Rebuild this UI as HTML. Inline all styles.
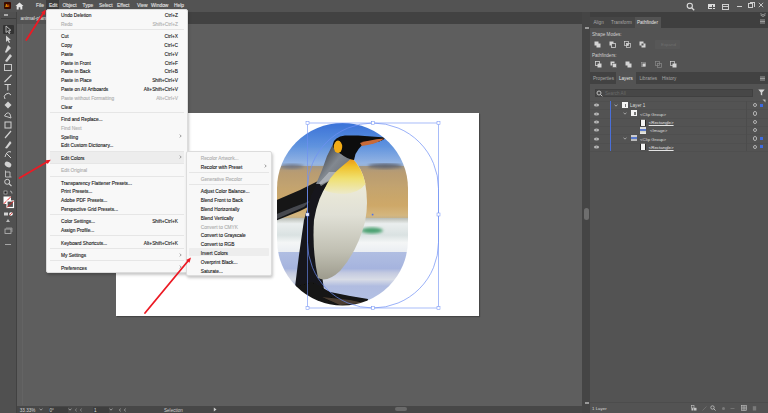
<!DOCTYPE html>
<html><head><meta charset="utf-8">
<style>
*{margin:0;padding:0;box-sizing:border-box}
html,body{width:768px;height:413px;overflow:hidden;background:#5e5e5e;font-family:"Liberation Sans",sans-serif;position:relative}
.a{position:absolute}
.t{position:absolute;white-space:nowrap;line-height:1}
.menu{background:#f8f8f8;border:1px solid #dcdcdc;box-shadow:1px 2px 3px rgba(0,0,0,.22);border-radius:2px}
.mi{position:absolute;white-space:nowrap;line-height:1;color:#1e1e1e;-webkit-text-stroke:0.12px currentColor}
.sep{position:absolute;height:1px;background:#e6e6e6}
.pt{position:absolute;white-space:nowrap;line-height:1;color:#cfcfcf}
</style></head><body>
<div class="a" style="left:0;top:0;width:768px;height:11.6px;background:#535353"></div>
<div class="a" style="left:17px;top:11.6px;width:565px;height:12px;background:#424242"></div>
<div class="a" style="left:17px;top:11.6px;width:29px;height:12px;background:#535353"></div>
<div class="pt" style="left:20.50px;top:17.05px;font-size:4.9px;color:#e8e8e8;">animal-plant.ai</div>
<div class="a" style="left:0;top:12px;width:17px;height:401px;background:#505050;border-right:1px solid #424242"></div>
<div class="a" style="left:17px;top:405.8px;width:565px;height:7.2px;background:#474747"></div>
<div class="a" style="left:21.8px;top:24px;width:1.2px;height:381px;background:#646464"></div>
<div class="a" style="left:582px;top:12px;width:8px;height:401px;background:#454545"></div>
<div class="a" style="left:590px;top:12px;width:178px;height:401px;background:#535353"></div>
<div class="pt" style="left:19.80px;top:409.20px;font-size:4.6px;color:#d6d6d6;">33.33%</div>
<div class="a" style="left:48.5px;top:406.5px;width:19px;height:6.5px;background:#3e3e3e"></div>
<div class="a" style="left:92.5px;top:406.5px;width:16px;height:6.5px;background:#3e3e3e"></div>
<div class="pt" style="left:49.50px;top:409.20px;font-size:4.6px;color:#d6d6d6;">0&deg;</div>
<div class="pt" style="left:94.00px;top:409.20px;font-size:4.6px;color:#d6d6d6;">1</div>
<div class="pt" style="left:164.00px;top:409.20px;font-size:4.6px;color:#cfcfcf;">Selection</div>
<svg class="a" style="left:39px;top:408px" width="4" height="3" viewBox="0 0 4 3"><path d="M0.5 0.6 L2 2.2 L3.5 0.6" fill="none" stroke="#bbb" stroke-width="0.7"/></svg>
<svg class="a" style="left:68.4px;top:408px" width="4" height="3" viewBox="0 0 4 3"><path d="M0.5 0.6 L2 2.2 L3.5 0.6" fill="none" stroke="#bbb" stroke-width="0.7"/></svg>
<svg class="a" style="left:108.8px;top:408px" width="4" height="3" viewBox="0 0 4 3"><path d="M0.5 0.6 L2 2.2 L3.5 0.6" fill="none" stroke="#bbb" stroke-width="0.7"/></svg>
<svg class="a" style="left:74px;top:407.5px" width="4" height="4" viewBox="0 0 4 4"><path d="M3 0.5 L1 2 L3 3.5" fill="none" stroke="#888" stroke-width="0.7"/></svg>
<svg class="a" style="left:79px;top:407.5px" width="4" height="4" viewBox="0 0 4 4"><path d="M3 0.5 L1 2 L3 3.5" fill="none" stroke="#888" stroke-width="0.7"/></svg>
<svg class="a" style="left:117.5px;top:407.5px" width="4" height="4" viewBox="0 0 4 4"><path d="M3 0.5 L1 2 L3 3.5" fill="none" stroke="#999" stroke-width="0.7"/></svg>
<svg class="a" style="left:123px;top:407.5px" width="4" height="4" viewBox="0 0 4 4"><path d="M3 0.5 L1 2 L3 3.5" fill="none" stroke="#999" stroke-width="0.7"/></svg>
<svg class="a" style="left:213px;top:407px" width="4" height="5" viewBox="0 0 4 5"><path d="M0.8 0.5 L3.5 2.5 L0.8 4.5Z" fill="#ccc"/></svg>
<div class="a" style="left:395px;top:406.6px;width:11.5px;height:4.8px;background:#6a6a6a;border-radius:2.4px"></div>
<div class="a" style="left:4px;top:2px;width:7px;height:7px;background:#3a0a00;border-radius:1px"></div>
<div class="t" style="left:5px;top:3.5px;font-size:4px;color:#ff9a00;font-weight:bold">Ai</div>
<svg class="a" style="left:15px;top:2px" width="9" height="8" viewBox="0 0 9 8"><path d="M4.5 0.5 L8.5 4 H7.3 V7.5 H5.3 V5.2 H3.7 V7.5 H1.7 V4 H0.5 Z" fill="#e6e6e6"/></svg>
<div class="a" style="left:46px;top:0;width:13px;height:12px;background:#3c3c3c"></div>
<div class="pt" style="left:36.00px;top:4.15px;font-size:4.9px;color:#e4e4e4;-webkit-text-stroke:0.1px #e4e4e4;">File</div>
<div class="pt" style="left:49.00px;top:4.15px;font-size:4.9px;color:#e4e4e4;-webkit-text-stroke:0.1px #e4e4e4;">Edit</div>
<div class="pt" style="left:62.50px;top:4.15px;font-size:4.9px;color:#e4e4e4;-webkit-text-stroke:0.1px #e4e4e4;">Object</div>
<div class="pt" style="left:82.50px;top:4.15px;font-size:4.9px;color:#e4e4e4;-webkit-text-stroke:0.1px #e4e4e4;">Type</div>
<div class="pt" style="left:99.00px;top:4.15px;font-size:4.9px;color:#e4e4e4;-webkit-text-stroke:0.1px #e4e4e4;">Select</div>
<div class="pt" style="left:117.00px;top:4.15px;font-size:4.9px;color:#e4e4e4;-webkit-text-stroke:0.1px #e4e4e4;">Effect</div>
<div class="pt" style="left:137.00px;top:4.15px;font-size:4.9px;color:#e4e4e4;-webkit-text-stroke:0.1px #e4e4e4;">View</div>
<div class="pt" style="left:151.00px;top:4.15px;font-size:4.9px;color:#e4e4e4;-webkit-text-stroke:0.1px #e4e4e4;">Window</div>
<div class="pt" style="left:174.00px;top:4.15px;font-size:4.9px;color:#e4e4e4;-webkit-text-stroke:0.1px #e4e4e4;">Help</div>
<div class="a" style="left:116px;top:113px;width:363px;height:203px;background:#fff;box-shadow:1px 1px 1px rgba(0,0,0,.25)"></div>
<div class="a" style="left:590px;top:11.6px;width:178px;height:16.4px;background:#3f3f3f"></div>
<div class="a" style="left:590px;top:17px;width:45px;height:11px;background:#464646"></div>
<div class="a" style="left:635px;top:17px;width:26px;height:11px;background:#535353"></div>
<div class="pt" style="left:593.50px;top:21.30px;font-size:4.6px;color:#a8a8a8;">Align</div>
<div class="pt" style="left:611.00px;top:21.30px;font-size:4.6px;color:#a8a8a8;">Transform</div>
<div class="pt" style="left:637.00px;top:21.30px;font-size:4.6px;color:#e6e6e6;">Pathfinder</div>
<div class="a" style="left:760px;top:21px;width:5px;height:0.8px;background:#9a9a9a;box-shadow:0 1.5px 0 #9a9a9a,0 -1.5px 0 #9a9a9a"></div>
<div class="pt" style="left:592.00px;top:32.80px;font-size:4.6px;color:#d0d0d0;">Shape Modes:</div>
<svg class="a" style="left:593.5px;top:40.5px" width="7" height="7" viewBox="0 0 7 7"><rect x="0.5" y="0.5" width="4" height="4" fill="#d4d4d4"/><rect x="2.5" y="2.5" width="4" height="4" fill="#d4d4d4"/></svg>
<svg class="a" style="left:608.5px;top:40.5px" width="7" height="7" viewBox="0 0 7 7"><rect x="0.5" y="0.5" width="4" height="4" fill="#d4d4d4"/><rect x="2.5" y="2.5" width="4" height="4" fill="#535353" stroke="#d4d4d4" stroke-width="0.8"/></svg>
<svg class="a" style="left:623.5px;top:40.5px" width="7" height="7" viewBox="0 0 7 7"><rect x="0.5" y="0.5" width="4" height="4" fill="none" stroke="#d4d4d4" stroke-width="0.7"/><rect x="2.5" y="2.5" width="4" height="4" fill="none" stroke="#d4d4d4" stroke-width="0.7"/><rect x="2.5" y="2.5" width="2" height="2" fill="#d4d4d4"/></svg>
<svg class="a" style="left:638.5px;top:40.5px" width="7" height="7" viewBox="0 0 7 7"><rect x="0.5" y="0.5" width="4" height="4" fill="#d4d4d4"/><rect x="2.5" y="2.5" width="4" height="4" fill="#d4d4d4"/><rect x="2.5" y="2.5" width="2" height="2" fill="#535353"/></svg>
<div class="a" style="left:655px;top:40px;width:25px;height:9px;background:#575757;border-radius:1px"></div>
<div class="pt" style="left:661.00px;top:43.40px;font-size:4.4px;color:#6e6e6e;">Expand</div>
<div class="pt" style="left:592.00px;top:53.80px;font-size:4.6px;color:#d0d0d0;">Pathfinders:</div>
<svg class="a" style="left:594.5px;top:60.5px" width="7" height="7" viewBox="0 0 7 7"><rect x="0.5" y="0.5" width="4" height="4" fill="none" stroke="#d4d4d4" stroke-width="0.8"/><rect x="2.5" y="2.5" width="4" height="4" fill="#d4d4d4"/></svg>
<svg class="a" style="left:609.5px;top:60.5px" width="7" height="7" viewBox="0 0 7 7"><rect x="0.5" y="0.5" width="4" height="4" fill="#d4d4d4"/><rect x="2.5" y="2.5" width="4" height="4" fill="#d4d4d4" stroke="#535353" stroke-width="0.5"/></svg>
<svg class="a" style="left:624.5px;top:60.5px" width="7" height="7" viewBox="0 0 7 7"><rect x="0.5" y="0.5" width="4" height="4" fill="#d4d4d4"/><rect x="2.5" y="2.5" width="4" height="4" fill="#d4d4d4"/></svg>
<svg class="a" style="left:639.5px;top:60.5px" width="7" height="7" viewBox="0 0 7 7"><rect x="1.5" y="1.5" width="4" height="4" fill="none" stroke="#9a9a9a" stroke-width="0.6"/><rect x="2.5" y="2.5" width="3" height="3" fill="#d4d4d4"/></svg>
<svg class="a" style="left:654.5px;top:60.5px" width="7" height="7" viewBox="0 0 7 7"><rect x="0.5" y="0.5" width="4" height="4" fill="none" stroke="#8a8a8a" stroke-width="0.7"/><rect x="2.5" y="2.5" width="4" height="4" fill="none" stroke="#8a8a8a" stroke-width="0.7"/></svg>
<svg class="a" style="left:669.5px;top:60.5px" width="7" height="7" viewBox="0 0 7 7"><rect x="0.5" y="0.5" width="4" height="4" fill="none" stroke="#d4d4d4" stroke-width="0.7"/><rect x="2.5" y="2.5" width="4" height="4" fill="#d4d4d4"/></svg>
<div class="a" style="left:590px;top:72px;width:178px;height:12px;background:#424242"></div>
<div class="a" style="left:616px;top:72px;width:20px;height:12px;background:#535353"></div>
<div class="pt" style="left:593.00px;top:77.30px;font-size:4.6px;color:#a8a8a8;">Properties</div>
<div class="pt" style="left:619.00px;top:77.30px;font-size:4.6px;color:#e6e6e6;">Layers</div>
<div class="pt" style="left:639.50px;top:77.30px;font-size:4.6px;color:#a8a8a8;">Libraries</div>
<div class="pt" style="left:662.00px;top:77.30px;font-size:4.6px;color:#a8a8a8;">History</div>
<div class="a" style="left:760px;top:77.5px;width:5px;height:0.8px;background:#9a9a9a;box-shadow:0 1.5px 0 #9a9a9a,0 -1.5px 0 #9a9a9a"></div>
<div class="a" style="left:595px;top:89px;width:158px;height:8px;background:#474747;border:0.6px solid #404040"></div>
<svg class="a" style="left:596px;top:89.5px" width="7" height="7" viewBox="0 0 7 7"><circle cx="3" cy="3" r="2" fill="none" stroke="#c8c8c8" stroke-width="0.9"/><path d="M4.4 4.4 L6.3 6.3" stroke="#c8c8c8" stroke-width="1"/></svg>
<div class="pt" style="left:605.00px;top:91.60px;font-size:4.6px;color:#6a6a6a;">Search All</div>
<svg class="a" style="left:757.5px;top:89px" width="7" height="7" viewBox="0 0 7 7"><path d="M0.3 0.5 H6.7 L4.2 3.6 V6.6 L2.8 5.8 V3.6 Z" fill="#d4d4d4"/></svg>
<div class="a" style="left:590px;top:101.0px;width:178px;height:0.6px;background:#4f4f4f"></div>
<svg class="a" style="left:593px;top:103.2px" width="7" height="4" viewBox="0 0 7 4"><ellipse cx="3.5" cy="2" rx="2.6" ry="1.5" fill="#b8b8b8"/><circle cx="3.5" cy="2" r="0.7" fill="#8a8a8a"/></svg>
<div class="a" style="left:752.5px;top:103.0px;width:4.4px;height:4.4px;border:1px solid #b4b4b4;border-radius:50%"></div>
<div class="a" style="left:590px;top:109.4px;width:178px;height:0.6px;background:#4f4f4f"></div>
<svg class="a" style="left:593px;top:111.6px" width="7" height="4" viewBox="0 0 7 4"><ellipse cx="3.5" cy="2" rx="2.6" ry="1.5" fill="#b8b8b8"/><circle cx="3.5" cy="2" r="0.7" fill="#8a8a8a"/></svg>
<div class="a" style="left:752.5px;top:111.4px;width:4.4px;height:4.4px;border:1px solid #b4b4b4;border-radius:50%"></div>
<div class="a" style="left:590px;top:118.0px;width:178px;height:0.6px;background:#4f4f4f"></div>
<svg class="a" style="left:593px;top:120.2px" width="7" height="4" viewBox="0 0 7 4"><ellipse cx="3.5" cy="2" rx="2.6" ry="1.5" fill="#b8b8b8"/><circle cx="3.5" cy="2" r="0.7" fill="#8a8a8a"/></svg>
<div class="a" style="left:752.5px;top:120.0px;width:4.4px;height:4.4px;border:1px solid #b4b4b4;border-radius:50%"></div>
<div class="a" style="left:590px;top:126.1px;width:178px;height:0.6px;background:#4f4f4f"></div>
<svg class="a" style="left:593px;top:128.3px" width="7" height="4" viewBox="0 0 7 4"><ellipse cx="3.5" cy="2" rx="2.6" ry="1.5" fill="#b8b8b8"/><circle cx="3.5" cy="2" r="0.7" fill="#8a8a8a"/></svg>
<div class="a" style="left:752.5px;top:128.1px;width:4.4px;height:4.4px;border:1px solid #b4b4b4;border-radius:50%"></div>
<div class="a" style="left:590px;top:134.4px;width:178px;height:0.6px;background:#4f4f4f"></div>
<svg class="a" style="left:593px;top:136.6px" width="7" height="4" viewBox="0 0 7 4"><ellipse cx="3.5" cy="2" rx="2.6" ry="1.5" fill="#b8b8b8"/><circle cx="3.5" cy="2" r="0.7" fill="#8a8a8a"/></svg>
<div class="a" style="left:752.5px;top:136.4px;width:4.4px;height:4.4px;border:1px solid #b4b4b4;border-radius:50%"></div>
<div class="a" style="left:590px;top:142.7px;width:178px;height:0.6px;background:#4f4f4f"></div>
<svg class="a" style="left:593px;top:144.9px" width="7" height="4" viewBox="0 0 7 4"><ellipse cx="3.5" cy="2" rx="2.6" ry="1.5" fill="#b8b8b8"/><circle cx="3.5" cy="2" r="0.7" fill="#8a8a8a"/></svg>
<div class="a" style="left:752.5px;top:144.7px;width:4.4px;height:4.4px;border:1px solid #b4b4b4;border-radius:50%"></div>
<div class="a" style="left:590px;top:151.1px;width:178px;height:0.6px;background:#4f4f4f"></div>
<div class="a" style="left:745.5px;top:101px;width:0.6px;height:50px;background:#4c4c4c"></div>
<svg class="a" style="left:762px;top:99px" width="4" height="4" viewBox="0 0 4 4"><path d="M0.5 0.5 H3.5 V3.5Z" fill="#bbb"/></svg>
<div class="a" style="left:609.6px;top:101px;width:1.5px;height:50px;background:#4a6fd8"></div>
<div class="a" style="left:759.5px;top:103.7px;width:3px;height:3px;background:#3d6ae0"></div>
<div class="a" style="left:759.5px;top:137.1px;width:3px;height:3px;background:#3d6ae0"></div>
<div class="a" style="left:759.5px;top:145.4px;width:3px;height:3px;background:#3d6ae0"></div>
<svg class="a" style="left:613.6px;top:103.7px" width="4" height="3" viewBox="0 0 4 3"><path d="M0.5 0.6 L2 2.2 L3.5 0.6" fill="none" stroke="#c8c8c8" stroke-width="0.7"/></svg>
<svg class="a" style="left:622.8px;top:112.1px" width="4" height="3" viewBox="0 0 4 3"><path d="M0.5 0.6 L2 2.2 L3.5 0.6" fill="none" stroke="#c8c8c8" stroke-width="0.7"/></svg>
<svg class="a" style="left:622.8px;top:137.1px" width="4" height="3" viewBox="0 0 4 3"><path d="M0.5 0.6 L2 2.2 L3.5 0.6" fill="none" stroke="#c8c8c8" stroke-width="0.7"/></svg>
<div class="a" style="left:621.5px;top:102px;width:6px;height:6px;background:#f4f4f4"><div class="a" style="left:3px;top:1.5px;width:1.5px;height:3px;background:#777"></div></div>
<div class="pt" style="left:630.00px;top:104.00px;font-size:4.6px;color:#dcdcdc;">Layer 1</div>
<div class="a" style="left:631px;top:110.2px;width:6px;height:6px;background:#f4f4f4"><div class="a" style="left:3px;top:1.5px;width:1.5px;height:3px;background:#777"></div></div>
<div class="pt" style="left:640.00px;top:112.70px;font-size:4.4px;color:#dcdcdc;">&lt;Clip Group&gt;</div>
<div class="a" style="left:640.3px;top:118.7px;width:6px;height:7px;background:#f4f4f4;border-left:1px solid #2a2a2a;border-right:1px solid #2a2a2a;border-top:0.6px solid #777"></div>
<div class="pt" style="left:648.70px;top:121.10px;font-size:4.4px;color:#e4e4e4;text-decoration:underline;">&lt;Rectangle&gt;</div>
<div class="a" style="left:640.3px;top:127px;width:6px;height:7px;background:linear-gradient(#ddd 0,#ddd 25%,#5a7acc 25%,#5a7acc 50%,#c8c8b8 50%,#eee 100%)"></div>
<div class="pt" style="left:650.00px;top:129.40px;font-size:4.4px;color:#dcdcdc;">&lt;Image&gt;</div>
<div class="a" style="left:631px;top:135px;width:6px;height:6px;background:linear-gradient(#ccc 0,#ccc 30%,#5a7acc 30%,#5a7acc 60%,#bbb 60%)"></div>
<div class="pt" style="left:640.00px;top:137.50px;font-size:4.4px;color:#dcdcdc;">&lt;Clip Group&gt;</div>
<div class="a" style="left:640.3px;top:143.4px;width:6px;height:7px;background:#f4f4f4;border-left:1px solid #2a2a2a;border-right:1px solid #2a2a2a;border-top:0.6px solid #777"></div>
<div class="pt" style="left:648.70px;top:145.90px;font-size:4.4px;color:#e4e4e4;text-decoration:underline;">&lt;Rectangle&gt;</div>
<div class="a" style="left:590px;top:402px;width:178px;height:0.6px;background:#4c4c4c"></div>
<div class="pt" style="left:592.00px;top:407.40px;font-size:4.4px;color:#d8d8d8;">1 Layer</div>
<svg class="a" style="left:691px;top:405px" width="6" height="6" viewBox="0 0 6 6"><rect x="0.5" y="0.5" width="2.5" height="2.5" fill="none" stroke="#c4c4c4" stroke-width="0.6"/><rect x="2.8" y="2.8" width="2.7" height="2.7" fill="#c4c4c4"/><rect x="0.5" y="3.2" width="1.8" height="2.3" fill="#c4c4c4"/></svg>
<svg class="a" style="left:702px;top:405.5px" width="5" height="5" viewBox="0 0 5 5"><path d="M0.5 4.5 L4.5 0.5" stroke="#7a7a7a" stroke-width="0.7"/></svg>
<svg class="a" style="left:710px;top:404.5px" width="6" height="6" viewBox="0 0 6 6"><circle cx="2.5" cy="2.5" r="1.7" fill="none" stroke="#c4c4c4" stroke-width="0.8"/><path d="M3.7 3.7 L5.5 5.5" stroke="#c4c4c4" stroke-width="0.9"/></svg>
<svg class="a" style="left:720.5px;top:405.5px" width="5" height="5" viewBox="0 0 5 5"><circle cx="2.5" cy="2.5" r="1.5" fill="#7a7a7a"/></svg>
<svg class="a" style="left:729.5px;top:405.5px" width="5" height="5" viewBox="0 0 5 5"><path d="M0.5 2.5 H4.5" stroke="#7a7a7a" stroke-width="0.8"/></svg>
<svg class="a" style="left:741px;top:404.5px" width="6" height="6" viewBox="0 0 6 6"><rect x="0.5" y="0.5" width="5" height="5" fill="none" stroke="#c4c4c4" stroke-width="0.6"/><path d="M2.2 0.5 V5.5 M3.8 0.5 V5.5 M0.5 2.2 H5.5 M0.5 3.8 H5.5" stroke="#c4c4c4" stroke-width="0.5"/></svg>
<svg class="a" style="left:751.5px;top:405px" width="5" height="6" viewBox="0 0 5 6"><rect x="0.8" y="1.2" width="3.4" height="4.3" fill="#7a7a7a"/></svg>
<svg class="a" style="left:686px;top:2px" width="9" height="9" viewBox="0 0 9 9"><circle cx="3.8" cy="3.8" r="2.6" fill="none" stroke="#dcdcdc" stroke-width="1.1"/><path d="M5.7 5.7 L8.2 8.2" stroke="#dcdcdc" stroke-width="1.3"/></svg>
<div class="a" style="left:708px;top:4px;width:7px;height:5px;background:#dcdcdc;border:0.6px solid #dcdcdc"><div class="a" style="left:3px;top:0;width:0.8px;height:5px;background:#535353"></div><div class="a" style="left:0;top:2px;width:7px;height:0.7px;background:#535353"></div></div>
<div class="a" style="left:722px;top:4px;width:7px;height:6px;border:0.9px solid #cfcfcf"><div class="a" style="left:0;top:1px;width:6px;height:0.9px;background:#cfcfcf"></div></div>
<div class="a" style="left:737px;top:5.5px;width:5px;height:0.9px;background:#cfcfcf"></div>
<div class="a" style="left:748px;top:3px;width:5px;height:5px;border:0.8px solid #cfcfcf;background:#535353"></div><div class="a" style="left:749.5px;top:1.8px;width:5px;height:5px;border-top:0.8px solid #cfcfcf;border-right:0.8px solid #cfcfcf"></div>
<svg class="a" style="left:758px;top:1.5px" width="6" height="6" viewBox="0 0 6 6"><path d="M0.8 0.8 L5.2 5.2 M5.2 0.8 L0.8 5.2" stroke="#cfcfcf" stroke-width="0.9"/></svg>
<svg class="a" style="left:760px;top:12.5px" width="6" height="4" viewBox="0 0 6 4"><path d="M0.5 0.5 L3 2 L5.5 0.5 M0.5 2 L3 3.5 L5.5 2" fill="none" stroke="#bbb" stroke-width="0.7"/></svg>
<div class="a" style="left:584.5px;top:26.5px;width:4px;height:1px;border-top:0.6px solid #999;border-bottom:0.6px solid #999"></div>
<div class="a" style="left:584.5px;top:401.5px;width:4px;height:1px;border-top:0.6px solid #999;border-bottom:0.6px solid #999"></div>
<div class="a" style="left:583.5px;top:208px;width:5px;height:12px;background:#6e6e6e;border-radius:2.5px"></div>
<div class="a" style="left:4px;top:13.5px;width:4px;height:1px;border-top:0.6px solid #aaa;border-bottom:0.6px solid #aaa"></div>
<div class="a" style="left:1px;top:18px;width:15px;height:0.8px;background:#3e3e3e"></div>
<div class="a" style="left:2.5px;top:24.5px;width:11px;height:9.5px;background:#333;border-radius:1px"></div>
<svg class="a" style="left:0;top:0" width="17" height="260" viewBox="0 0 17 260"><path d="M6 26 L6 32.5 L7.6 31 L9 33.5 L10 33 L8.8 30.5 L10.8 30.2 Z" fill="none" stroke="#d2d2d2" stroke-width="0.8"/><path d="M6 35.5 L6 42 L7.6 40.5 L9 43 L10 42.5 L8.8 40 L10.8 39.7 Z" fill="#d2d2d2"/><path d="M5 52 L8 45 L11 48 L6 53 Z" fill="#d2d2d2"/><path d="M5 61 L10 54 L12 56 L7 62 Z" fill="#d2d2d2"/><rect x="4.5" y="64.5" width="7" height="6" fill="none" stroke="#d2d2d2" stroke-width="0.9"/><path d="M4.5 82 L11.5 75" stroke="#d2d2d2" stroke-width="1.3"/><path d="M4.5 84.5 H11 M7.8 84.5 V90.5" stroke="#d2d2d2" stroke-width="1.1"/><path d="M5 99 A3.2 3.2 0 1 1 11 95" fill="none" stroke="#d2d2d2" stroke-width="1"/><path d="M8 101.5 L11.5 105 L8 108.5 L4.5 105 Z" fill="#d2d2d2"/><path d="M4.5 116 Q7 111 10 114 L11 118 L8 117 Z" fill="none" stroke="#d2d2d2" stroke-width="0.9"/><rect x="5" y="122" width="6" height="6" fill="none" stroke="#d2d2d2" stroke-width="1"/><path d="M5 138 L11 131" stroke="#d2d2d2" stroke-width="1.2"/><path d="M5 148 L10 141 L11.5 143 L7 148.5 Z" fill="#d2d2d2"/><path d="M5 157 Q7 150 11 152 M6 153 L11 158" fill="none" stroke="#d2d2d2" stroke-width="1"/><ellipse cx="8" cy="164.5" rx="3.5" ry="2.5" fill="#d2d2d2" transform="rotate(30 8 164.5)"/><path d="M5.5 170.5 V177 H11.5 M5.5 172 H10 V177" fill="none" stroke="#d2d2d2" stroke-width="0.8"/><circle cx="7.2" cy="181.8" r="2.5" fill="none" stroke="#d2d2d2" stroke-width="1"/><path d="M9 183.6 L11.5 186.2" stroke="#d2d2d2" stroke-width="1.2"/><rect x="4" y="191" width="3" height="3" fill="#222" stroke="#d2d2d2" stroke-width="0.6"/><path d="M10 191 Q12 191 12 193.5" fill="none" stroke="#d2d2d2" stroke-width="0.7"/><rect x="3.5" y="196.5" width="7.5" height="7.5" fill="#fff"/><path d="M3.8 203.8 L10.8 196.8" stroke="#e02020" stroke-width="1"/><rect x="7" y="201" width="6.5" height="6.5" fill="#535353" stroke="#fff" stroke-width="1.2"/><path d="M7 207.5 L13.5 201" stroke="#e02020" stroke-width="1"/><rect x="4" y="212.5" width="4" height="3" fill="#d2d2d2"/><circle cx="11" cy="214" r="1.8" fill="#fff"/><path d="M9.7 215.3 L12.3 212.7" stroke="#e02020" stroke-width="0.8"/><path d="M6 222 L8 219 L10 222 Z" fill="#bbb"/><rect x="5" y="229" width="6" height="4.5" fill="none" stroke="#bbb" stroke-width="0.8"/><path d="M6 228 H12 V232" fill="none" stroke="#bbb" stroke-width="0.6"/><path d="M5 244.5 H11" stroke="#bbb" stroke-width="0.8"/></svg>
<svg class="a" style="left:0;top:0" width="768" height="413" viewBox="0 0 768 413">
<defs>
<clipPath id="cp"><rect x="277" y="123" width="131" height="182.5" rx="65.5" ry="65.5"/></clipPath>
<linearGradient id="sky" x1="0" y1="123" x2="0" y2="168" gradientUnits="userSpaceOnUse">
<stop offset="0" stop-color="#3a72d8"/><stop offset="0.5" stop-color="#5e92de"/><stop offset="0.85" stop-color="#8eb0e2"/><stop offset="1" stop-color="#a4c0e4"/></linearGradient>
<linearGradient id="sand" x1="0" y1="166" x2="0" y2="222" gradientUnits="userSpaceOnUse">
<stop offset="0" stop-color="#a89880"/><stop offset="0.12" stop-color="#b89c72"/><stop offset="0.4" stop-color="#c4a46e"/><stop offset="0.7" stop-color="#cea868"/><stop offset="0.88" stop-color="#d4b67e"/><stop offset="1" stop-color="#b0ac9c"/></linearGradient>
<linearGradient id="surf" x1="0" y1="218" x2="0" y2="256" gradientUnits="userSpaceOnUse">
<stop offset="0" stop-color="#b8bcb4"/><stop offset="0.15" stop-color="#eaeeee"/><stop offset="0.45" stop-color="#dae2e2"/><stop offset="0.65" stop-color="#f4f6f6"/><stop offset="1" stop-color="#e6eaf0"/></linearGradient>
<linearGradient id="water" x1="0" y1="252" x2="0" y2="307" gradientUnits="userSpaceOnUse">
<stop offset="0" stop-color="#b0bee2"/><stop offset="0.3" stop-color="#a6b4de"/><stop offset="0.38" stop-color="#c4cae0"/><stop offset="0.5" stop-color="#d8dce6"/><stop offset="0.62" stop-color="#b0bce0"/><stop offset="1" stop-color="#b4c2e6"/></linearGradient>
<linearGradient id="belly" x1="0" y1="180" x2="0" y2="280" gradientUnits="userSpaceOnUse">
<stop offset="0" stop-color="#eeecd8"/><stop offset="0.35" stop-color="#e0e0d6"/><stop offset="0.72" stop-color="#c0bfb2"/><stop offset="1" stop-color="#9c9a8c"/></linearGradient>
<linearGradient id="chest" x1="0" y1="158" x2="0" y2="195" gradientUnits="userSpaceOnUse">
<stop offset="0" stop-color="#e8901a"/><stop offset="0.22" stop-color="#f0c028"/><stop offset="0.55" stop-color="#f0e070"/><stop offset="1" stop-color="#ecead0"/></linearGradient>
<linearGradient id="neck" x1="320" y1="150" x2="350" y2="175" gradientUnits="userSpaceOnUse">
<stop offset="0" stop-color="#34383e"/><stop offset="0.5" stop-color="#828890"/><stop offset="1" stop-color="#686e76"/></linearGradient>
<filter id="soft" x="-5%" y="-5%" width="110%" height="110%"><feGaussianBlur stdDeviation="0.35"/></filter>
<filter id="bl" x="-10%" y="-10%" width="120%" height="120%"><feGaussianBlur stdDeviation="1.6"/></filter>
</defs>
<g clip-path="url(#cp)"><g filter="url(#soft)">
<rect x="270" y="120" width="145" height="50" fill="url(#sky)"/>
<rect x="270" y="166" width="145" height="56" fill="url(#sand)"/>
<g filter="url(#bl)">
<ellipse cx="292" cy="166.5" rx="12" ry="2.2" fill="#6a7080"/>
<ellipse cx="385" cy="166.2" rx="17" ry="2.6" fill="#5a5e6a"/>
<rect x="270" y="165.8" width="145" height="2" fill="#8a8a8a" opacity="0.45"/>
</g>
<rect x="270" y="218" width="145" height="36" fill="url(#surf)"/>
<g filter="url(#bl)">
<ellipse cx="372" cy="230.5" rx="11" ry="3" fill="#4aa070"/>
</g>
<rect x="270" y="252" width="145" height="56" fill="url(#water)"/>
<!-- flipper -->
<path d="M270 203 L300 190 L322 179 L336 172 L331 190 L316 203 L300 211 L270 223 Z" fill="#141619"/>
<path d="M272 216 L294 207 L310 201 L304 207 L288 214 L272 221 Z" fill="#7a7e86" opacity="0.5"/>
<!-- back -->
<path d="M322 174 L336 174 L327 198 L320 222 L317 250 L322 275 L324 290 L304 293 L295 287 L299 255 L304 220 L311 196 Z" fill="#16181b"/>
<!-- neck gray -->
<path d="M333 144 L348 150 L354 158 L352 166 L338 176 L322 184 L316 184 L322 170 L327 156 Z" fill="url(#neck)"/>
<path d="M319 183 L329 172 L337 172 L331 180 L321 186 Z" fill="#c8ccd0" opacity="0.6"/>
<!-- chest/belly -->
<path d="M352 158 Q362 168 365 182 Q369 203 365 222 Q357 252 340 271 Q327 283 318 278 Q312 250 314 220 Q318 196 328 184 Q340 170 352 158 Z" fill="url(#belly)"/>
<path d="M352 158 Q362 168 365.5 184 Q360 192 345 194 Q332 194 324 190 Q330 176 340 168 Z" fill="url(#chest)"/>
<!-- head -->
<path d="M333 144 Q334 137 345 135.5 L358 135.5 L385 137.5 Q384 141 374 142.5 L363 144 Q358 149 355.5 154 L354 160 Q347 159 341 154 Q332 149 333 144 Z" fill="#0c0c0c"/>
<path d="M360 143 Q368 140 384 138.5 Q380 142 370 144.5 L362 146 Z" fill="#c86a38"/>
<ellipse cx="338" cy="146.8" rx="4.2" ry="6.2" fill="#f2ac14"/>
<!-- feet -->
<path d="M297 286 L312 282 L330 292 L350 296 L368 299 L367 305 L340 307 L312 303 L296 297 Z" fill="#121212"/>
<path d="M322 297 L350 300 L364 303 L340 305 Z" fill="#5a4a3a" opacity="0.8"/>
</g></g>
<!-- selected path -->
<rect x="307.5" y="123" width="131" height="185" rx="65.5" ry="65.5" fill="none" stroke="#6f8ff5" stroke-width="0.7"/>
<rect x="307.5" y="123" width="131" height="185" fill="none" stroke="#6f8ff5" stroke-width="0.6"/>
<g fill="#fff" stroke="#6f8ff5" stroke-width="0.5">
<rect x="306" y="121.5" width="3" height="3"/><rect x="371.5" y="121.5" width="3" height="3"/><rect x="437" y="121.5" width="3" height="3"/>
<rect x="306" y="213" width="3" height="3"/><rect x="437" y="213" width="3" height="3"/>
<rect x="306" y="306.5" width="3" height="3"/><rect x="371.5" y="306.5" width="3" height="3"/><rect x="437" y="306.5" width="3" height="3"/>
</g>
<rect x="371.8" y="213.8" width="1.6" height="1.6" fill="#4a6ff0"/>
</svg>
<div class="a menu" style="left:46px;top:9px;width:142px;height:264px"></div>
<div class="a" style="left:50px;top:151px;width:134px;height:12px;background:#ededed;border-radius:1px"></div>
<div class="mi" style="left:61.00px;top:13.90px;font-size:4.8px;">Undo Deletion</div>
<div class="mi" style="right:590.00px;top:13.90px;font-size:4.8px;">Ctrl+Z</div>
<div class="mi" style="left:61.00px;top:23.00px;font-size:4.8px;color:#b0b0b0;">Redo</div>
<div class="mi" style="right:590.00px;top:23.00px;font-size:4.8px;color:#b0b0b0;">Shift+Ctrl+Z</div>
<div class="sep" style="left:50px;top:28.90px;width:134px"></div>
<div class="mi" style="left:61.00px;top:35.40px;font-size:4.8px;">Cut</div>
<div class="mi" style="right:590.00px;top:35.40px;font-size:4.8px;">Ctrl+X</div>
<div class="mi" style="left:61.00px;top:44.10px;font-size:4.8px;">Copy</div>
<div class="mi" style="right:590.00px;top:44.10px;font-size:4.8px;">Ctrl+C</div>
<div class="mi" style="left:61.00px;top:52.70px;font-size:4.8px;">Paste</div>
<div class="mi" style="right:590.00px;top:52.70px;font-size:4.8px;">Ctrl+V</div>
<div class="mi" style="left:61.00px;top:61.50px;font-size:4.8px;">Paste in Front</div>
<div class="mi" style="right:590.00px;top:61.50px;font-size:4.8px;">Ctrl+F</div>
<div class="mi" style="left:61.00px;top:70.30px;font-size:4.8px;">Paste in Back</div>
<div class="mi" style="right:590.00px;top:70.30px;font-size:4.8px;">Ctrl+B</div>
<div class="mi" style="left:61.00px;top:78.90px;font-size:4.8px;">Paste in Place</div>
<div class="mi" style="right:590.00px;top:78.90px;font-size:4.8px;">Shift+Ctrl+V</div>
<div class="mi" style="left:61.00px;top:88.00px;font-size:4.8px;">Paste on All Artboards</div>
<div class="mi" style="right:590.00px;top:88.00px;font-size:4.8px;">Alt+Shift+Ctrl+V</div>
<div class="mi" style="left:61.00px;top:96.80px;font-size:4.8px;color:#b0b0b0;">Paste without Formatting</div>
<div class="mi" style="right:590.00px;top:96.80px;font-size:4.8px;color:#b0b0b0;">Alt+Ctrl+V</div>
<div class="mi" style="left:61.00px;top:105.50px;font-size:4.8px;">Clear</div>
<div class="sep" style="left:50px;top:111.50px;width:134px"></div>
<div class="mi" style="left:61.00px;top:117.70px;font-size:4.8px;">Find and Replace...</div>
<div class="mi" style="left:61.00px;top:126.70px;font-size:4.8px;color:#b0b0b0;">Find Next</div>
<div class="mi" style="left:61.00px;top:135.50px;font-size:4.8px;">Spelling</div>
<svg class="a" style="left:179.00px;top:134.00px" width="3" height="4" viewBox="0 0 3 4"><path d="M0.8 0.6 L2.2 2 L0.8 3.4" fill="none" stroke="#555" stroke-width="0.6"/></svg>
<div class="mi" style="left:61.00px;top:144.30px;font-size:4.8px;">Edit Custom Dictionary...</div>
<div class="sep" style="left:50px;top:150.50px;width:134px"></div>
<div class="mi" style="left:61.00px;top:156.50px;font-size:4.8px;">Edit Colors</div>
<svg class="a" style="left:179.00px;top:155.00px" width="3" height="4" viewBox="0 0 3 4"><path d="M0.8 0.6 L2.2 2 L0.8 3.4" fill="none" stroke="#555" stroke-width="0.6"/></svg>
<div class="sep" style="left:50px;top:162.80px;width:134px"></div>
<div class="mi" style="left:61.00px;top:169.30px;font-size:4.8px;color:#b0b0b0;">Edit Original</div>
<div class="sep" style="left:50px;top:175.50px;width:134px"></div>
<div class="mi" style="left:61.00px;top:181.50px;font-size:4.8px;">Transparency Flattener Presets...</div>
<div class="mi" style="left:61.00px;top:190.20px;font-size:4.8px;">Print Presets...</div>
<div class="mi" style="left:61.00px;top:199.00px;font-size:4.8px;">Adobe PDF Presets...</div>
<div class="mi" style="left:61.00px;top:207.90px;font-size:4.8px;">Perspective Grid Presets...</div>
<div class="sep" style="left:50px;top:214.10px;width:134px"></div>
<div class="mi" style="left:61.00px;top:220.40px;font-size:4.8px;">Color Settings...</div>
<div class="mi" style="right:590.00px;top:220.40px;font-size:4.8px;">Shift+Ctrl+K</div>
<div class="mi" style="left:61.00px;top:229.40px;font-size:4.8px;">Assign Profile...</div>
<div class="sep" style="left:50px;top:235.20px;width:134px"></div>
<div class="mi" style="left:61.00px;top:241.50px;font-size:4.8px;">Keyboard Shortcuts...</div>
<div class="mi" style="right:590.00px;top:241.50px;font-size:4.8px;">Alt+Shift+Ctrl+K</div>
<div class="sep" style="left:50px;top:247.70px;width:134px"></div>
<div class="mi" style="left:61.00px;top:254.20px;font-size:4.8px;">My Settings</div>
<svg class="a" style="left:179.00px;top:252.70px" width="3" height="4" viewBox="0 0 3 4"><path d="M0.8 0.6 L2.2 2 L0.8 3.4" fill="none" stroke="#555" stroke-width="0.6"/></svg>
<div class="sep" style="left:50px;top:260.00px;width:134px"></div>
<div class="mi" style="left:61.00px;top:266.50px;font-size:4.8px;">Preferences</div>
<svg class="a" style="left:179.00px;top:265.00px" width="3" height="4" viewBox="0 0 3 4"><path d="M0.8 0.6 L2.2 2 L0.8 3.4" fill="none" stroke="#555" stroke-width="0.6"/></svg>
<div class="a menu" style="left:186px;top:151px;width:86px;height:125px"></div>
<div class="a" style="left:189px;top:248.4px;width:80px;height:8px;background:#ededed;border-radius:1px"></div>
<div class="mi" style="left:200.70px;top:156.50px;font-size:4.8px;color:#b0b0b0;">Recolor Artwork...</div>
<div class="mi" style="left:200.70px;top:165.80px;font-size:4.8px;">Recolor with Preset</div>
<svg class="a" style="left:263.50px;top:164.30px" width="3" height="4" viewBox="0 0 3 4"><path d="M0.8 0.6 L2.2 2 L0.8 3.4" fill="none" stroke="#555" stroke-width="0.6"/></svg>
<div class="sep" style="left:189px;top:171.50px;width:80px"></div>
<div class="mi" style="left:200.70px;top:178.00px;font-size:4.8px;color:#b0b0b0;">Generative Recolor</div>
<div class="sep" style="left:189px;top:183.90px;width:80px"></div>
<div class="mi" style="left:200.70px;top:190.30px;font-size:4.8px;">Adjust Color Balance...</div>
<div class="mi" style="left:200.70px;top:199.20px;font-size:4.8px;">Blend Front to Back</div>
<div class="mi" style="left:200.70px;top:208.10px;font-size:4.8px;">Blend Horizontally</div>
<div class="mi" style="left:200.70px;top:216.90px;font-size:4.8px;">Blend Vertically</div>
<div class="mi" style="left:200.70px;top:225.50px;font-size:4.8px;color:#b0b0b0;">Convert to CMYK</div>
<div class="mi" style="left:200.70px;top:234.40px;font-size:4.8px;">Convert to Grayscale</div>
<div class="mi" style="left:200.70px;top:243.10px;font-size:4.8px;">Convert to RGB</div>
<div class="mi" style="left:200.70px;top:251.90px;font-size:4.8px;">Invert Colors</div>
<div class="mi" style="left:200.70px;top:260.90px;font-size:4.8px;">Overprint Black...</div>
<div class="mi" style="left:200.70px;top:269.70px;font-size:4.8px;">Saturate...</div>
<svg class="a" style="left:0;top:0" width="768" height="413" viewBox="0 0 768 413">
<path d="M26.3 40.1 L43.0 13.8" stroke="#ec1a24" stroke-width="1.8" stroke-linecap="round"/><path d="M45.7 9.6 L44.9 15.0 L41.2 12.6 Z" fill="#ec1a24"/>
<path d="M19.5 178.0 L46.5 162.2" stroke="#ec1a24" stroke-width="1.8" stroke-linecap="round"/><path d="M50.8 159.7 L47.6 164.1 L45.4 160.3 Z" fill="#ec1a24"/>
<path d="M145.0 313.0 L187.8 261.3" stroke="#ec1a24" stroke-width="1.8" stroke-linecap="round"/><path d="M191.0 257.5 L189.5 262.8 L186.1 259.9 Z" fill="#ec1a24"/>
</svg>
</body></html>
